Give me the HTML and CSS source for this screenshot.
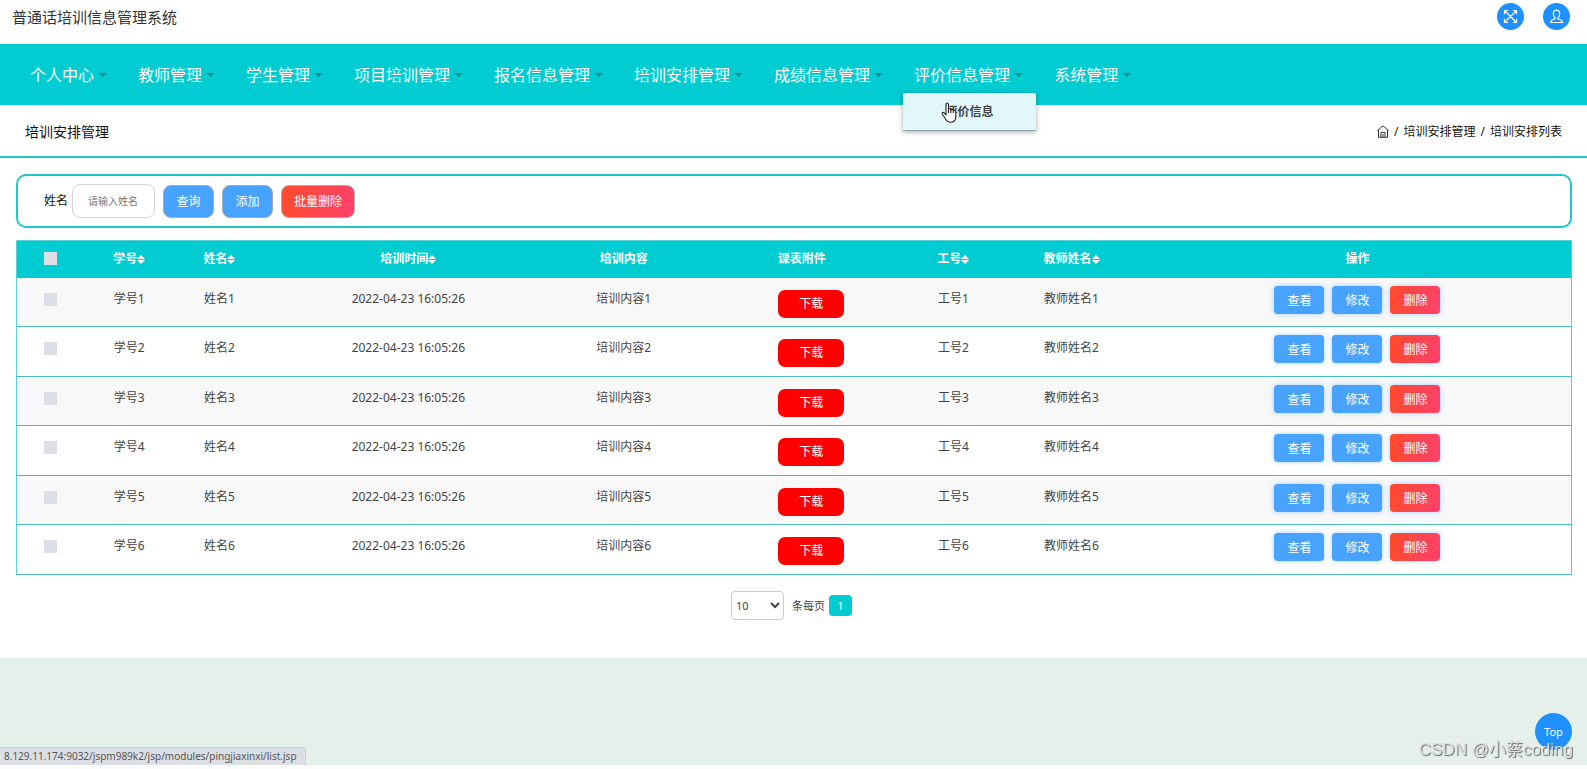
FILE: index.html
```html
<!DOCTYPE html>
<html lang="zh-CN">
<head>
<meta charset="utf-8">
<title>普通话培训信息管理系统</title>
<link rel="stylesheet" href="styles.css">
</head>
<body>
<header class="topbar">
  <h1 class="brand">普通话培训信息管理系统</h1>
  <div class="tools">
    <button class="round" type="button" aria-label="全屏">
      <svg width="15" height="15" viewBox="0 0 15 15" fill="none" stroke="#fff" stroke-width="1.2"><path d="M2 2l11 11M13 2L2 13M1.5 5.2V1.5h3.7M9.8 1.5h3.7v3.7M13.5 9.8v3.7H9.8M5.2 13.5H1.5V9.8"/></svg>
    </button>
    <button class="round" type="button" aria-label="用户">
      <svg width="15" height="15" viewBox="0 0 15 15" fill="none" stroke="#fff" stroke-width="1.2"><path d="M6 8.8C4.900 7.900 4.300 6.400 4.300 4.800 4.300 2.600 5.500 1.200 7.500 1.200s3.200 1.400 3.200 3.600c0 1.600-.6 3.100-1.700 4v1c1.900.5 4.200 1.200 4.700 3.700H1.300c.5-2.500 2.800-3.200 4.700-3.700z"/></svg>
    </button>
  </div>
</header>
<nav class="nav">
  <a class="item" href="#">个人中心</a>
  <a class="item" href="#">教师管理</a>
  <a class="item" href="#">学生管理</a>
  <a class="item" href="#">项目培训管理</a>
  <a class="item" href="#">报名信息管理</a>
  <a class="item" href="#">培训安排管理</a>
  <a class="item" href="#">成绩信息管理</a>
  <div class="open">
    <a class="item" href="#">评价信息管理</a>
    <div class="menu">
      <a class="menu-link" href="#">评价信息</a>
      <svg class="pointer" width="17" height="22" viewBox="0 0 17 22" fill="#fff" stroke="#222" stroke-width="1.100" stroke-linejoin="round" aria-hidden="true"><path d="M5 13V2.300C5 .6 7.500.6 7.500 2.300V7.500c.3-1.200 2.400-1 2.400.5.400-1.100 2.400-.8 2.400.6.500-.9 2.500-.6 2.500 1.100v4.600c0 3.500-1.800 6-5 6-3 0-4.400-1.500-5.600-3.800L1.200 12c-.6-1.300 1-2.200 2-1.100z"/><path d="M7.500 7v4M9.900 8v3M12.300 8.600V11" fill="none"/></svg>
    </div>
  </div>
  <a class="item" href="#">系统管理</a>
</nav>
<main class="page">
  <div class="heading">
    <h2 class="title">培训安排管理</h2>
    <div class="crumbs">
      <svg width="12" height="13" viewBox="0 0 12 13" fill="none" stroke="#333" stroke-width="1"><path d="M.5 5.500L6 .8l5.500 4.700M1.500 4.800v7.500h9V4.800M4 12V7.500h4V12M6 9v3"/></svg>
      <span>/</span><a href="#">培训安排管理</a><span>/</span><span>培训安排列表</span>
    </div>
  </div>
  <form class="search">
    <label for="name">姓名</label>
    <input class="field" id="name" type="text" placeholder="请输入姓名">
    <button class="btn large" type="button">查询</button>
    <button class="btn large" type="button">添加</button>
    <button class="btn large danger" type="button">批量删除</button>
  </form>
  <table class="list">
    <colgroup><col class="c-check"><col class="c-no"><col class="c-name"><col class="c-time"><col class="c-text"><col class="c-file"><col class="c-name"><col class="c-text"><col class="c-ops"></colgroup>
    <thead><tr>
      <th><input class="check" type="checkbox" aria-label="全选"></th>
      <th>学号<i class="sort"></i></th><th>姓名<i class="sort"></i></th><th>培训时间<i class="sort"></i></th><th>培训内容</th><th>课表附件</th><th>工号<i class="sort"></i></th><th>教师姓名<i class="sort"></i></th><th>操作</th>
    </tr></thead>
    <tbody>
      <tr><td><input class="check" type="checkbox" aria-label="选择1"></td><td>学号1</td><td>姓名1</td><td>2022-04-23 16:05:26</td><td>培训内容1</td><td class="file"><button class="download" type="button">下载</button></td><td>工号1</td><td>教师姓名1</td><td class="ops"><div class="actions"><button class="btn" type="button">查看</button><button class="btn" type="button">修改</button><button class="btn danger" type="button">删除</button></div></td></tr>
      <tr><td><input class="check" type="checkbox" aria-label="选择2"></td><td>学号2</td><td>姓名2</td><td>2022-04-23 16:05:26</td><td>培训内容2</td><td class="file"><button class="download" type="button">下载</button></td><td>工号2</td><td>教师姓名2</td><td class="ops"><div class="actions"><button class="btn" type="button">查看</button><button class="btn" type="button">修改</button><button class="btn danger" type="button">删除</button></div></td></tr>
      <tr><td><input class="check" type="checkbox" aria-label="选择3"></td><td>学号3</td><td>姓名3</td><td>2022-04-23 16:05:26</td><td>培训内容3</td><td class="file"><button class="download" type="button">下载</button></td><td>工号3</td><td>教师姓名3</td><td class="ops"><div class="actions"><button class="btn" type="button">查看</button><button class="btn" type="button">修改</button><button class="btn danger" type="button">删除</button></div></td></tr>
      <tr><td><input class="check" type="checkbox" aria-label="选择4"></td><td>学号4</td><td>姓名4</td><td>2022-04-23 16:05:26</td><td>培训内容4</td><td class="file"><button class="download" type="button">下载</button></td><td>工号4</td><td>教师姓名4</td><td class="ops"><div class="actions"><button class="btn" type="button">查看</button><button class="btn" type="button">修改</button><button class="btn danger" type="button">删除</button></div></td></tr>
      <tr><td><input class="check" type="checkbox" aria-label="选择5"></td><td>学号5</td><td>姓名5</td><td>2022-04-23 16:05:26</td><td>培训内容5</td><td class="file"><button class="download" type="button">下载</button></td><td>工号5</td><td>教师姓名5</td><td class="ops"><div class="actions"><button class="btn" type="button">查看</button><button class="btn" type="button">修改</button><button class="btn danger" type="button">删除</button></div></td></tr>
      <tr><td><input class="check" type="checkbox" aria-label="选择6"></td><td>学号6</td><td>姓名6</td><td>2022-04-23 16:05:26</td><td>培训内容6</td><td class="file"><button class="download" type="button">下载</button></td><td>工号6</td><td>教师姓名6</td><td class="ops"><div class="actions"><button class="btn" type="button">查看</button><button class="btn" type="button">修改</button><button class="btn danger" type="button">删除</button></div></td></tr>
    </tbody>
  </table>
  <div class="pager">
    <select class="size" id="size"><option>10</option><option>25</option><option>50</option></select>
    <label class="per" for="size">条每页</label>
    <button class="current" type="button">1</button>
  </div>
</main>
<div class="status">8.129.11.174:9032/jspm989k2/jsp/modules/pingjiaxinxi/list.jsp</div>
<a class="to-top" href="#">Top</a>
<div class="watermark">CSDN @小蔡coding</div>
</body>
</html>
```
FILE: styles.css
```css
* { box-sizing: border-box; }
body {
  margin: 0;
  min-height: 100vh;
  background: #e6f0eb;
  border-bottom: 4px solid #fcfcfc;
  color: #444;
  font: 12px/18px "Noto Sans", "Noto Sans CJK SC", sans-serif;
}
a { color: inherit; text-decoration: none; }
button, input, select { font: inherit; margin: 0; }
button { border: 0; padding: 0; cursor: pointer; }

.topbar { display: flex; justify-content: space-between; height: 44px; padding: 3px 17px 0 12px; background: #fff; }
.brand { margin: 2px 0 0; font-size: 15px; line-height: 24px; font-weight: 400; color: #333; }
.tools { display: flex; gap: 19px; }
.round { display: flex; align-items: center; justify-content: center; width: 27px; height: 27px; border-radius: 50%; background: #1e90ff; }

.nav { display: flex; align-items: center; gap: 31px; height: 61px; padding-left: 30px; background: #00ccd1; }
.item { display: flex; align-items: center; gap: 4px; color: #fff; font-size: 16px; line-height: 24px; white-space: nowrap; }
.item::after { content: ""; border: 4px solid transparent; border-top-color: #148f96; border-bottom: 0; border-left-width: 5px; }
.open { position: relative; }
.menu { position: absolute; z-index: 2; top: 30px; left: -11px; width: 133px; background: #e1f7fa; border-bottom: 1px solid #8fa5ad; box-shadow: 0 1px 5px rgba(0, 0, 0, .35); }
.menu-link { display: block; line-height: 37px; text-align: center; font-weight: 600; color: #444; }
.pointer { position: absolute; left: 38px; top: 9px; }

.page { background: #fff; padding-bottom: 38px; }
.heading { display: flex; align-items: center; justify-content: space-between; height: 53px; padding: 2px 25px 0; border-bottom: 2px solid #1cc8ce; color: #111; }
.title { margin: 0; font-size: 14px; font-weight: 400; }
.crumbs { display: flex; align-items: center; gap: 5px; }

.search { display: flex; align-items: center; gap: 8px; height: 54px; margin: 16px 15px 12px 16px; padding-left: 26px; border: 2px solid #1cc8ce; border-radius: 10px; color: #111; }
.search label { margin-right: -4px; }
.field { width: 83px; height: 34px; padding: 0 15px; border: 1px solid #d5d5d5; border-radius: 8px; background: #fff; font-size: 10px; }
.field::placeholder { color: #777; }
.btn { min-width: 50px; height: 28px; padding: 2px 12px 0; border-radius: 4px; background: #48a3ff; color: #fff; box-shadow: 0 0 5px rgba(72, 163, 255, .5); }
.large { min-width: 51px; height: 33px; border: 1px solid #aaa8b5; border-radius: 8px; box-shadow: none; }
.danger { background: linear-gradient(100deg, #ff4b2b, #ff416c); background-origin: border-box; }

.list { width: calc(100% - 31px); margin: 0 15px 0 16px; border-collapse: collapse; table-layout: fixed; border: 1px solid #5bd0d4; }
.c-check { width: 4.4%; }
.c-no { width: 5.7%; }
.c-name { width: 5.9%; }
.c-time { width: 18.4%; }
.c-text { width: 9.3%; }
.c-file { width: 13.6%; }
.c-ops { width: 27.5%; }
.list th { height: 37px; padding: 0 0 1px; background: #00ccd1; color: #fff; font-weight: 700; white-space: nowrap; }
.list td { height: 49px; padding: 12px 0 0; text-align: center; vertical-align: top; border-bottom: 1px solid #4abcc2; }
.list tr:nth-child(even) td { height: 50px; }
.list tr:nth-child(odd) td { background: #f8f8f8; }
.list .file { padding-left: 19px; }
.list .ops { padding-top: 8px; }
.check { appearance: none; display: block; width: 13px; height: 13px; margin: 0 auto; background: #dcdfe6; }
td .check { margin-top: 3px; }
.sort { display: inline-flex; flex-direction: column; gap: 1px; vertical-align: middle; }
.sort::before, .sort::after { content: ""; border: 4px solid transparent; }
.sort::before { border-top: 0; border-bottom-color: #fff; }
.sort::after { border-bottom: 0; border-top-color: #fff; }
.download { display: block; width: 66px; height: 28px; margin: 0 auto; border-radius: 7px; background: #f00; color: #fff; }
.actions { display: flex; justify-content: center; gap: 8px; }

.pager { display: flex; align-items: center; justify-content: center; margin: 16px 4px 0 0; font-size: 11px; }
.size { width: 53px; height: 29px; border: 1px solid #ccc; border-radius: 4px; background: #fff; color: #444; }
.per { margin: 0 4px 0 8px; }
.current { width: 23px; height: 21px; border-radius: 4px; background: #00ccd1; color: #fff; }

.status { position: fixed; left: 0; bottom: 4px; padding: 0 8px 0 4px; background: #dcdfe4; border: solid #cdd0d4; border-width: 1px 1px 0 0; border-radius: 0 3px 0 0; color: #555; font-size: 10px; line-height: 17px; }
.to-top { position: fixed; right: 15px; bottom: 19px; width: 37px; height: 37px; border-radius: 50%; background: #1e90ff; color: #fff; font-size: 11px; line-height: 37px; text-align: center; }
.watermark { position: fixed; right: 14px; bottom: 7px; color: #ddd; font: 17px/24px "Liberation Sans", "Noto Sans CJK SC", sans-serif; text-shadow: 1px 1px 1px #666; }
```
